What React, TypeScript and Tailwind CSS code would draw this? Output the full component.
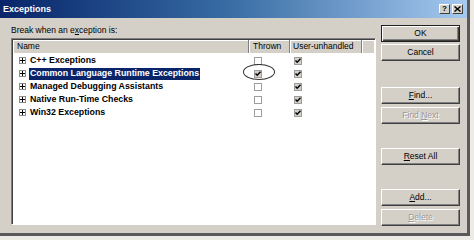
import React from 'react';

type Item = { name: string; thrown: boolean; userUnhandled: boolean; selected?: boolean };

const items: Item[] = [
  { name: 'C++ Exceptions', thrown: false, userUnhandled: true },
  { name: 'Common Language Runtime Exceptions', thrown: true, userUnhandled: true, selected: true },
  { name: 'Managed Debugging Assistants', thrown: false, userUnhandled: true },
  { name: 'Native Run-Time Checks', thrown: false, userUnhandled: true },
  { name: 'Win32 Exceptions', thrown: false, userUnhandled: true },
];

const Check = ({ checked }: { checked: boolean }) => (
  <div
    className={`w-[8px] h-[8px] border border-[#9c9c9c] flex items-center justify-center ${
      checked ? 'bg-[#d4d0c8]' : 'bg-white'
    }`}
  >
    {checked && (
      <svg width="6" height="6" viewBox="0 0 6 6">
        <path d="M0.5 2.5 L2.2 4.3 L5.5 0.8" stroke="#000" strokeWidth="1.4" fill="none" />
      </svg>
    )}
  </div>
);

const Plus = () => (
  <div className="w-[7px] h-[7px] border border-[#8c8c8c] bg-white flex items-center justify-center shrink-0">
    <svg width="5" height="5" viewBox="0 0 5 5">
      <path d="M0 2.5 H5 M2.5 0 V5" stroke="#000" strokeWidth="1" />
    </svg>
  </div>
);

const Btn = ({
  children,
  disabled,
  isDefault,
  className = '',
}: {
  children: React.ReactNode;
  disabled?: boolean;
  isDefault?: boolean;
  className?: string;
}) => (
  <div
    className={`w-[79px] h-[17px] flex items-center justify-center whitespace-pre bg-[#d4d0c8] ${
      isDefault ? 'border border-[#202020]' : 'border border-t-white border-l-white border-r-[#404040] border-b-[#404040]'
    } ${
      isDefault
        ? 'shadow-[inset_1px_1px_#fff,inset_-1px_-1px_#404040,inset_-2px_-2px_#808080]'
        : 'shadow-[inset_-1px_-1px_#808080]'
    } ${disabled ? 'text-[#9a9a9a] [text-shadow:1px_1px_#fff]' : 'text-black'} ${className}`}
  >
    <span>{children}</span>
  </div>
);

export default function App() {
  return (
    <div className="w-[474px] h-[240px] bg-[#ecebe6] font-['Liberation_Sans',Arial,sans-serif] text-[8.5px] leading-none">
      <div className="w-[470px] h-[236px] bg-[#d4d0c8] border-r-[3px] border-b-[3px] border-r-[#5a5a5a] border-b-[#5a5a5a] flex flex-col">
        {/* title bar */}
        <div className="h-[18px] bg-gradient-to-r from-[#0a246a] via-[#3a6ea5] to-[#a6caf0] flex items-center pl-[3px] pr-[4px]">
          <span className="text-white font-bold text-[9px]">Exceptions</span>
          <div className="ml-auto flex gap-[2px]">
            <div className="w-[11px] h-[10px] bg-[#d4d0c8] border border-t-white border-l-white border-r-[#404040] border-b-[#404040] flex items-center justify-center text-[8px] font-bold">
              ?
            </div>
            <div className="w-[11px] h-[10px] bg-[#d4d0c8] border border-t-white border-l-white border-r-[#404040] border-b-[#404040] flex items-center justify-center">
              <svg width="7" height="6" viewBox="0 0 7 6">
                <path d="M0.5 0.5 L6.5 5.5 M6.5 0.5 L0.5 5.5" stroke="#000" strokeWidth="1.4" />
              </svg>
            </div>
          </div>
        </div>

        <div className="flex flex-1 pl-[10px]">
          {/* left */}
          <div className="flex flex-col w-[366px] pt-[5px]">
            <div className="h-[14px] flex items-center pl-[1px] whitespace-pre">
              <span>
                Break when an e<span className="underline">x</span>ception is:
              </span>
            </div>
            <div className="relative ml-[1px] mt-[1px] h-[187px] w-[365px] bg-white border border-t-[#808080] border-l-[#808080] border-r-white border-b-white shadow-[inset_1px_1px_#404040]">
              {/* header */}
              <div className="flex h-[13px] ml-[1px] mt-[1px] mr-[1px] whitespace-nowrap">
                <div className="w-[236px] bg-[#d4d0c8] border-r border-r-[#808080] shadow-[inset_1px_1px_#fff] flex items-center pl-[4px]">
                  Name
                </div>
                <div className="w-[41px] bg-[#d4d0c8] border-r border-r-[#808080] shadow-[inset_1px_1px_#fff] flex items-center pl-[4px]">
                  Thrown
                </div>
                <div className="w-[72px] bg-[#d4d0c8] border-r border-r-[#808080] shadow-[inset_1px_1px_#fff] flex items-center pl-[3px]">
                  User-unhandled
                </div>
                <div className="flex-1 bg-[#d4d0c8] shadow-[inset_1px_1px_#fff]" />
              </div>
              {/* rows */}
              <div className="flex flex-col pt-[1px]">
                {items.map((it) => (
                  <div key={it.name} className="flex items-center h-[13px]">
                    <div className="w-[237px] flex items-center pl-[7px]">
                      <Plus />
                      <span
                        className={`ml-[3px] px-[1px] h-[12px] flex items-center font-bold text-[8.8px] whitespace-nowrap ${
                          it.selected ? 'bg-[#0a246a] text-white' : 'text-black'
                        }`}
                      >
                        {it.name}
                      </span>
                    </div>
                    <div className="w-[42px] pl-[5px]">
                      <Check checked={it.thrown} />
                    </div>
                    <div className="pl-[3px]">
                      <Check checked={it.userUnhandled} />
                    </div>
                  </div>
                ))}
              </div>
              {/* annotation circle */}
              <div className="absolute left-[231px] top-[25px] w-[32px] h-[16px] rounded-[50%] border border-[#303030]" />
            </div>
          </div>

          {/* right buttons */}
          <div className="flex flex-col pl-[5px] pt-[7px]">
            <Btn isDefault>OK</Btn>
            <Btn className="mt-[2px]">Cancel</Btn>
            <Btn className="mt-[26px]">
              <span className="underline">F</span>ind...
            </Btn>
            <Btn className="mt-[3px]" disabled>
              Find <span className="underline">N</span>ext
            </Btn>
            <Btn className="mt-[24px]">
              <span className="underline">R</span>eset All
            </Btn>
            <Btn className="mt-[24px]">
              <span className="underline">A</span>dd...
            </Btn>
            <Btn className="mt-[3px]" disabled>
              <span className="underline">D</span>elete
            </Btn>
          </div>
        </div>
      </div>
    </div>
  );
}
